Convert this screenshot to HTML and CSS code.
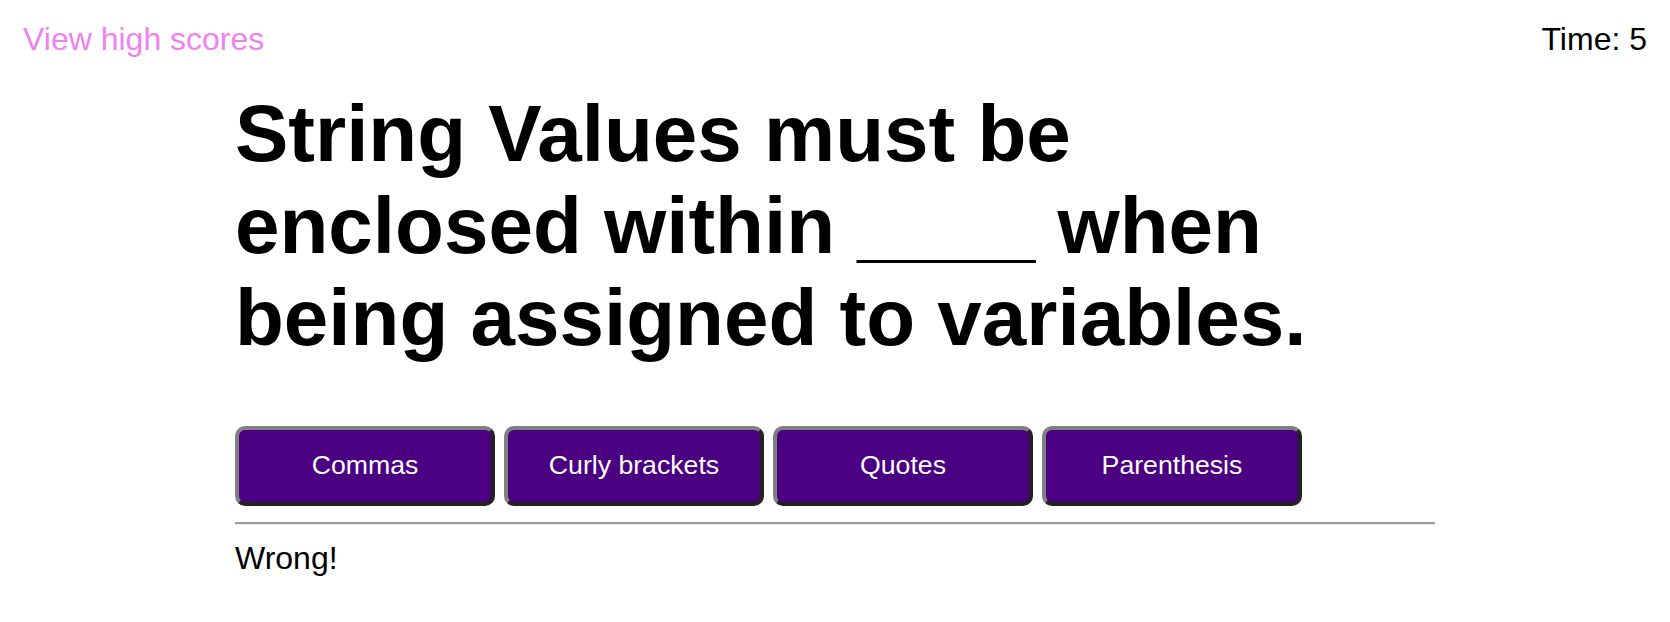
FILE: index.html
```html
<!DOCTYPE html>
<html lang="en">
<head>
<meta charset="utf-8">
<title>Code Quiz</title>
<link rel="stylesheet" href="styles.css">
</head>
<body>
<header class="topbar">
  <a class="highscores" href="#">View high scores</a>
  <div class="timer">Time: 5</div>
</header>
<main class="quiz">
  <h1 class="question">String Values must be enclosed within ____ when being assigned to variables.</h1>
  <div class="choices">
    <button class="choice">Commas</button>
    <button class="choice">Curly brackets</button>
    <button class="choice">Quotes</button>
    <button class="choice">Parenthesis</button>
  </div>
  <hr class="divider">
  <p class="result">Wrong!</p>
</main>
</body>
</html>
```
FILE: styles.css
```css
html, body {
  margin: 0;
  padding: 0;
  background: #ffffff;
}

body {
  font-family: "Liberation Sans", Arial, Helvetica, sans-serif;
  color: #000000;
}

.topbar {
  display: flex;
  justify-content: space-between;
  align-items: baseline;
  padding: 21px 23px 0 23px;
  font-size: 32px;
  line-height: normal;
}

.highscores {
  color: #ee82ee;
  text-decoration: none;
}

.timer {
  color: #000000;
}

.quiz {
  width: 1200px;
  margin: 30px auto 0 auto;
}

.question {
  margin: 0 0 62px 0;
  font-size: 80px;
  font-weight: bold;
  line-height: normal;
}

.choices {
  display: flex;
  gap: 9px;
}

.choice {
  box-sizing: border-box;
  width: 260px;
  height: 80px;
  padding: 0 0 2px 0;
  background: #4b0082;
  color: #ffffff;
  font-family: "Liberation Sans", Arial, Helvetica, sans-serif;
  font-size: 26.67px;
  border-width: 4px;
  border-style: solid;
  border-color: #808080 #222222 #222222 #808080;
  border-radius: 10px;
  cursor: pointer;
}

.divider {
  margin: 16px 0 15px 0;
  border: 0;
  border-top: 2px solid #9a9a9a;
  border-bottom: 1px solid #eeeeee;
  height: 0;
}

.result {
  margin: 0;
  font-size: 32px;
  line-height: normal;
}
```
